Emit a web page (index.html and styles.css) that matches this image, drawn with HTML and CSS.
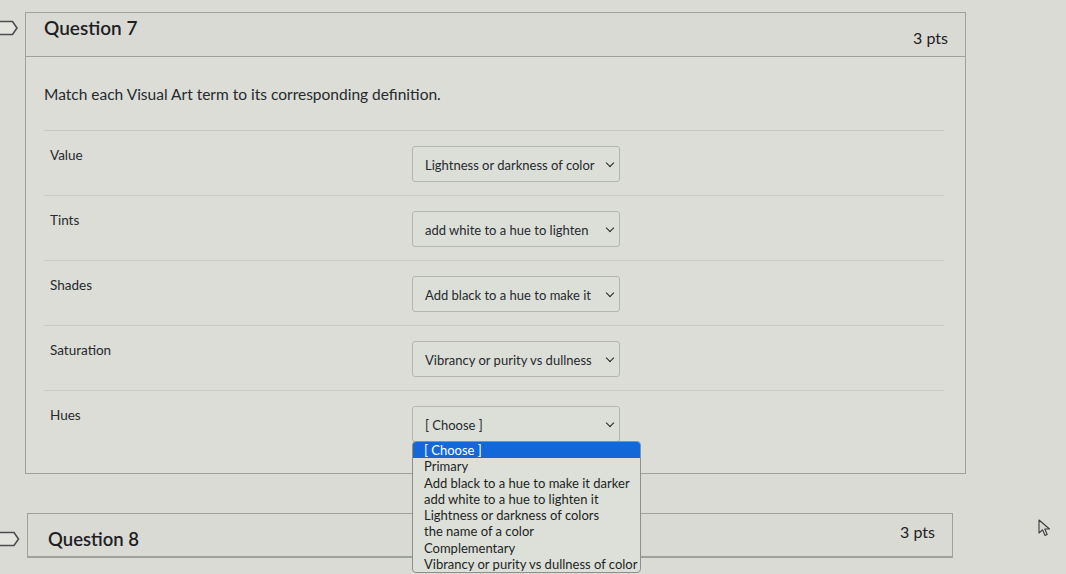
FILE: index.html
```html
<!DOCTYPE html>
<html lang="en">
  <head>
    <meta charset="UTF-8" />
    <meta name="viewport" content="width=device-width, initial-scale=1.0" />
    <link rel="stylesheet" href="styles.css">
  </head>
  <body>
    <div class="quiz">
      <div class="question-wrap q7">
        <svg class="flag" width="22" height="16" viewBox="0 0 22 16">
          <path d="M-4 1.5 H12.5 L17 8 L12.5 14.5 H-4" fill="#e4e4de" stroke="#4a4d52" stroke-width="1.6" />
        </svg>
        <div class="question">
          <div class="q-header">
            <h2>Question 7</h2>
            <span class="pts">3 pts</span>
          </div>
          <div class="q-body">
            <p class="q-text">Match each Visual Art term to its corresponding definition.</p>

            <div class="match-row">
              <span class="term">Value</span>
              <div class="select">Lightness or darkness of color<span class="chev"></span></div>
            </div>
            <div class="match-row">
              <span class="term">Tints</span>
              <div class="select">add white to a hue to lighten<span class="chev"></span></div>
            </div>
            <div class="match-row">
              <span class="term">Shades</span>
              <div class="select">Add black to a hue to make it<span class="chev"></span></div>
            </div>
            <div class="match-row">
              <span class="term">Saturation</span>
              <div class="select">Vibrancy or purity vs dullness<span class="chev"></span></div>
            </div>
            <div class="match-row last">
              <span class="term">Hues</span>
              <div class="select-holder">
                <div class="select">[ Choose ]<span class="chev"></span></div>
                <ul class="options">
                  <li class="active">[ Choose ]</li>
                  <li>Primary</li>
                  <li>Add black to a hue to make it darker</li>
                  <li>add white to a hue to lighten it</li>
                  <li>Lightness or darkness of colors</li>
                  <li>the name of a color</li>
                  <li>Complementary</li>
                  <li>Vibrancy or purity vs dullness of color</li>
                </ul>
              </div>
            </div>
          </div>
        </div>
      </div>

      <div class="question-wrap q8">
        <svg class="flag" width="22" height="16" viewBox="0 0 22 16">
          <path d="M-4 1.5 H14 L18.5 8 L14 14.5 H-4" fill="#e4e4de" stroke="#4a4d52" stroke-width="1.6" />
        </svg>
        <div class="question">
          <div class="q-header">
            <h2>Question 8</h2>
            <span class="pts">3 pts</span>
          </div>
        </div>
      </div>
    </div>

    <svg class="cursor" width="14" height="18" viewBox="0 0 14 18">
      <path d="M1 1 L1 14 L4.5 10.8 L7 16.5 L9.2 15.5 L6.8 10 L11.5 10 Z" fill="#d8d8d2" stroke="#3b3d40" stroke-width="1.1" stroke-linejoin="round" />
    </svg>
  </body>
</html>
```

FILE: styles.css
```css
body {
  margin: 0;
  background-color: #d9dbd4;
  font-family: Lato, "Open Sans", sans-serif;
  color: #262a2e;
  height: 574px;
  overflow: hidden;
}
.quiz {
  padding-top: 12px;
  display: flex;
  flex-direction: column;
  gap: 39px;
}
.question-wrap {
  display: flex;
  align-items: flex-start;
}
.flag {
  flex: none;
  margin-top: 8px;
  margin-right: 3px;
}
.question {
  width: 939px;
  border: 1px solid #9fa19c;
  background-color: #dbddd6;
}
.q8 .question {
  width: 924px;
  margin-left: 2px;
}
.q8 .flag {
  margin-top: 18px;
}
.q-header {
  height: 43px;
  border-bottom: 1px solid #9fa19c;
  display: flex;
  justify-content: space-between;
  align-items: flex-start;
  padding: 0 17px 0 18px;
  background-color: #d9dad4;
}
.q-header h2 {
  margin: 3px 0 0;
  font-size: 19px;
  font-weight: 600;
  color: #1e2124;
}
.q-header .pts {
  font-size: 16px;
  margin-top: 15px;
  color: #1e2124;
}
.q8 .q-header {
  height: 42px;
  padding: 0 17px 0 20px;
}
.q8 .q-header h2 {
  margin-top: 14px;
  font-size: 18.5px;
}
.q8 .q-header .pts {
  margin-top: 8px;
}
.q-body {
  padding: 0 21px 18px 18px;
}
.q-text {
  margin: 0;
  height: 74px;
  padding-top: 28px;
  box-sizing: border-box;
  font-size: 15.5px;
  border-bottom: 1px solid #c6c8c2;
}
.match-row {
  display: flex;
  height: 64px;
  border-bottom: 1px solid #c8cac4;
}
.match-row.last {
  border-bottom: none;
}
.term {
  width: 362px;
  padding: 16px 0 0 6px;
  font-size: 13.5px;
}
.select {
  margin-top: 15px;
  width: 208px;
  height: 36px;
  box-sizing: border-box;
  border: 1px solid #b4b6b0;
  border-radius: 3px;
  background-color: #dcded8;
  display: flex;
  align-items: center;
  padding: 2px 0 0 12px;
  font-size: 13px;
  white-space: nowrap;
  overflow: hidden;
  position: relative;
}
.chev {
  position: absolute;
  right: 6px;
  top: 13px;
  width: 5px;
  height: 5px;
  border-right: 1.5px solid #222;
  border-bottom: 1.5px solid #222;
  transform: rotate(45deg);
  background-color: #dcded8;
  box-shadow: 4px 4px 0 6px #dcded8;
}
.select-holder {
  position: relative;
}
.options {
  position: absolute;
  left: 0;
  top: 50px;
  width: 227px;
  margin: 0;
  padding: 0;
  list-style: none;
  background-color: #dddfd9;
  border: 1px solid #8e908b;
  border-radius: 4px;
  font-size: 13px;
  line-height: 16.3px;
  z-index: 2;
}
.options li {
  padding-left: 11px;
  white-space: nowrap;
  color: #1c1f22;
}
.options li.active {
  background-color: #1467d6;
  color: #ffffff;
  border-radius: 3px 3px 0 0;
}
.cursor {
  position: absolute;
  left: 1038px;
  top: 519px;
}
```
